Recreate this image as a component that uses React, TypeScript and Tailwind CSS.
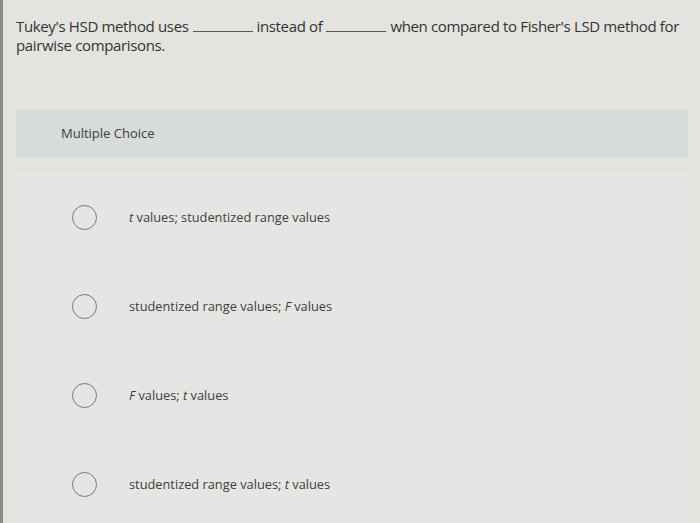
const options: React.ReactNode[] = [
  <><i>t</i> values; studentized range values</>,
  <>studentized range values; <i>F</i> values</>,
  <><i>F</i> values; <i>t</i> values</>,
  <>studentized range values; <i>t</i> values</>,
];

function Blank() {
  return <span className="mx-[4px] inline-block w-[60px] border-b border-[#555] align-baseline" />;
}

export default function App() {
  return (
    <div className="flex h-[523px] w-[700px] overflow-hidden bg-[#e3e3e0] font-['Open_Sans',sans-serif] text-[#3a3a3a]">
      <div className="w-[3px] shrink-0 bg-[#8c8c89]" />
      <div className="flex min-w-0 flex-1 flex-col">
        <p className="pl-[13px] pt-[17px] text-[15px] leading-[19px] tracking-[-0.35px] whitespace-nowrap text-[#333]">
          Tukey's HSD method uses
          <Blank />
          instead of
          <Blank />
          when compared to Fisher's LSD method for
          <br />
          pairwise comparisons.
        </p>
        <div className="mt-[55px] mr-[12px] ml-[13px] flex flex-col">
          <div className="flex h-[47px] items-center bg-[#d7dbdb] pl-[45px] text-[13px] text-[#3d3d3d]">
            Multiple Choice
          </div>
          <ul className="mt-[16px] flex flex-col bg-[#e5e6e3]">
            {options.map((o, i) => (
              <li key={i} className="flex h-[89px] items-center">
                <span className="ml-[56px] h-[25px] w-[25px] shrink-0 rounded-full border-[1.5px] border-[#7a7a7a]" />
                <span className="ml-[32px] text-[12.8px] text-[#3d3d3d]">{o}</span>
              </li>
            ))}
          </ul>
        </div>
      </div>
    </div>
  );
}
